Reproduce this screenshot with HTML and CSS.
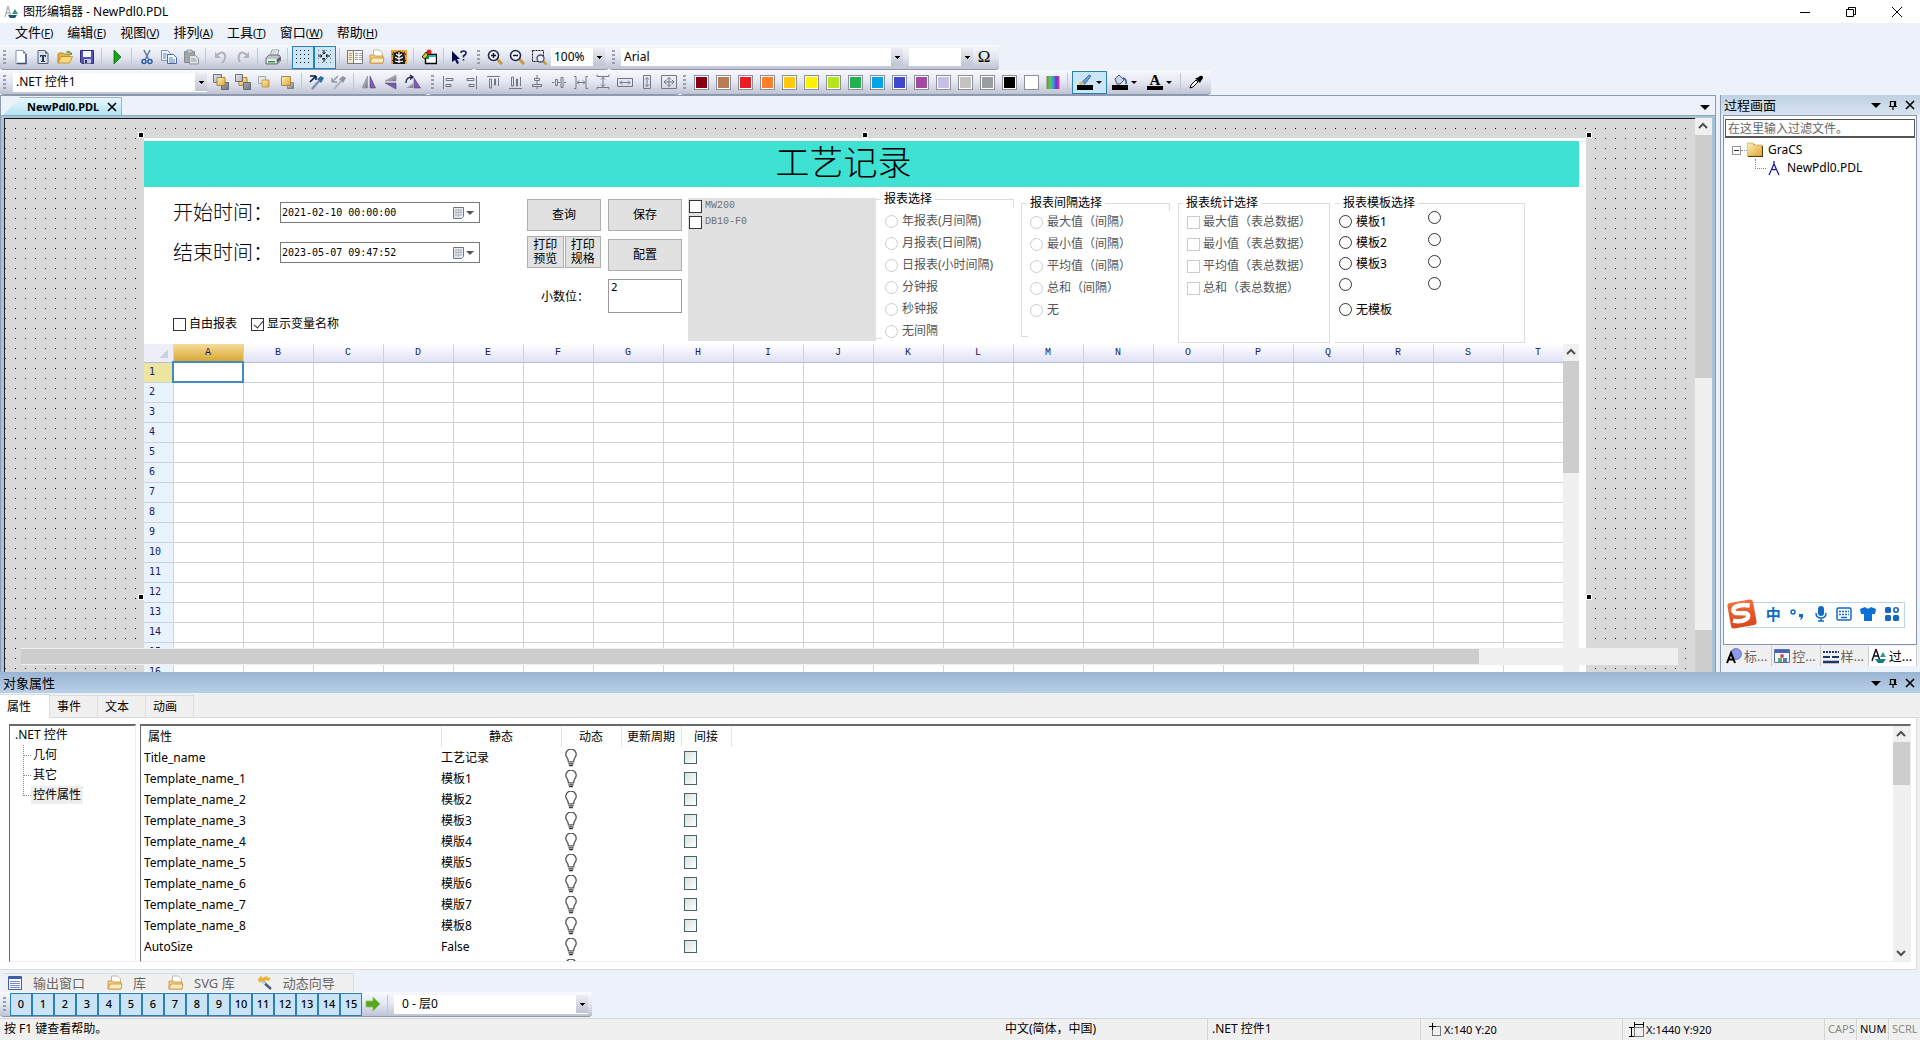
FILE: index.html
```html
<!DOCTYPE html>
<html lang="zh-CN">
<head>
    <meta charset="utf-8">
    <title>图形编辑器 - NewPdl0.PDL</title>
    <link rel="stylesheet" href="styles.css">
</head>
<body>
<!-- icon sprite -->
<svg class="sprite" aria-hidden="true">
    <defs>
        <linearGradient id="gold" x1="0" y1="0" x2="1" y2="1"><stop offset="0" stop-color="#fff0b8"/><stop offset="1" stop-color="#e2a83a"/></linearGradient>
        <linearGradient id="steel" x1="0" y1="0" x2="1" y2="1"><stop offset="0" stop-color="#e6e8ec"/><stop offset="1" stop-color="#6f747e"/></linearGradient>
        <linearGradient id="rainbow"><stop offset="0" stop-color="#8a7a50"/><stop offset=".25" stop-color="#4fd04a"/><stop offset=".5" stop-color="#3fa0d8"/><stop offset=".75" stop-color="#6a35d8"/><stop offset="1" stop-color="#e03a9a"/></linearGradient>
        <linearGradient id="sogou" x1="0" y1="0" x2="0" y2="1"><stop offset="0" stop-color="#f0703a"/><stop offset="1" stop-color="#d8481c"/></linearGradient>
    </defs>
    <symbol id="i-app" viewBox="0 0 16 16"><path d="M5 2 2 13M5 2l3 11M3 9h4" stroke="#a9b4bb" stroke-width="1.3" fill="none"/><path d="M12 5l3 5H9z" fill="#3d8f8c"/><path d="M5 11h9l-2 3H7z" fill="#1d5a72"/></symbol>
    <symbol id="i-new" viewBox="0 0 16 16"><path d="M3 1.500h7l3 3v10H3z" fill="#fbfdff" stroke="#8b96ab"/><path d="M13 5v9.500H4" fill="none" stroke="#35507e" stroke-width="1.300"/><path d="M10 1.500v3h3z" fill="#6b7f9f"/></symbol>
    <symbol id="i-newt" viewBox="0 0 16 16"><path d="M3 1.500h7l3 3v10H3z" fill="#dbe1ea" stroke="#56637c"/><path d="M10 1.500v3h3z" fill="#46587a"/><path d="M5 6h6v2h-1l-.5-1H9v5h1v1H6v-1h1V7h-.5L6 8H5z" fill="#2b3d5e"/></symbol>
    <symbol id="i-open" viewBox="0 0 16 16"><path d="M1 14V5l1-1h4l1 1h5v3H4z" fill="#e5b545" stroke="#a87a20" stroke-width=".8"/><path d="M1 14l3-6.500h11.500L12.500 14z" fill="#fbd97c" stroke="#b98824" stroke-width=".8"/><path d="M9 3q3-3 5 1l1-1v3h-3l1-1q-1.500-2-3-1z" fill="#6f9a55"/></symbol>
    <symbol id="i-save" viewBox="0 0 16 16"><path d="M1.500 1.500h13v13H3l-1.500-1.500z" fill="#5753b4" stroke="#2e2b78"/><path d="M4 2h8v6H4z" fill="#f5f6fc"/><path d="M5 10h7v4.500H5z" fill="#c5c8da"/><path d="M6 11h2v3H6z" fill="#2e2b78"/></symbol>
    <symbol id="i-play" viewBox="0 0 16 16"><path d="M5 1l7 7-7 7z" fill="#16a516" stroke="#0a6f0d" stroke-width=".8"/></symbol>
    <symbol id="i-cut" viewBox="0 0 16 16"><path d="M5 1l4.500 9M11 1L6.500 10" stroke="#64789f" stroke-width="1.600" fill="none"/><circle cx="5" cy="12.500" r="2" fill="none" stroke="#2c5da8" stroke-width="1.500"/><circle cx="11" cy="12.500" r="2" fill="none" stroke="#2c5da8" stroke-width="1.500"/></symbol>
    <symbol id="i-copy" viewBox="0 0 16 16"><path d="M.5 1.500h6l3 3v7h-9z" fill="#eef4fd" stroke="#7a93bf"/><path d="M6.500 5.500h6l3 3v6h-9z" fill="#f5f9ff" stroke="#4468a6"/><path d="M2 5h4M2 7h3M2 9h3M8 9h4M8 11h6M8 13h6" stroke="#5d86c8"/></symbol>
    <symbol id="i-paste" viewBox="0 0 16 16"><path d="M1.500 2.500h10v11h-10z" fill="#a3a6ad" stroke="#878b94"/><path d="M4 1h5v3H4z" fill="#cfd1d6" stroke="#878b94" stroke-width=".8"/><path d="M6.500 6.500h6l3 3v5.500h-9z" fill="#e0e2e8" stroke="#9296a0"/><path d="M8 10h5M8 12h6" stroke="#9ea2ac"/></symbol>
    <symbol id="i-undo" viewBox="0 0 16 16"><path d="M4 6q6-5 8 0 1 4-3 8" fill="none" stroke="#b0b3bd" stroke-width="2"/><path d="M2 3v6h6z" fill="#b0b3bd"/></symbol>
    <symbol id="i-redo" viewBox="0 0 16 16"><path d="M12 6q-6-5-8 0-1 4 1 7" fill="none" stroke="#b0b3bd" stroke-width="2"/><path d="M14 3v6H8z" fill="#b0b3bd"/></symbol>
    <symbol id="i-print" viewBox="0 0 16 16"><path d="M5 7l2-6h7l-2 6z" fill="#fff" stroke="#7d8898" stroke-width=".8"/><path d="M7 3h5M6.500 5h5" stroke="#92a2b5" stroke-width=".7"/><path d="M1 9l3-3h10l1.500 2v4L12 15H1z" fill="#bcc5ca" stroke="#4d5960" stroke-width=".8"/><path d="M2 10h9v4H2z" fill="#e8edf0"/><path d="M3 12h7v1.500H3z" fill="#2f9c3e"/><path d="M12 10l3-2v3l-3 3z" fill="#51645a"/></symbol>
    <symbol id="i-grid" viewBox="0 0 16 16"><path d="M1 1.500h15M1 5.500h15M1 9.500h15M1 13.500h15" stroke="#111" stroke-dasharray="1 3"/></symbol>
    <symbol id="i-snap" viewBox="0 0 16 16"><path d="M1 1.500h15M1 5.500h15M1 9.500h15M1 13.500h15" stroke="#777" stroke-dasharray="1 3"/><path d="M7 1v4M7 9v4M1 7h4M9 7h4M5.500 3.500L7 5l1.500-1.500M5.500 10.500L7 9l1.500 1.500M3.500 5.500L5 7 3.500 8.500M10.500 5.500L9 7l1.500 1.500" stroke="#000" fill="none"/></symbol>
    <symbol id="i-lib" viewBox="0 0 16 16"><path d="M.5 1.500h15v13H.5z" fill="#fff" stroke="#77797f"/><path d="M1 2h5v12H1z" fill="#f8ecca"/><path d="M6.500 2v12" stroke="#77797f"/><path d="M2 4.500h3M2 6.500h3M2 8.500h3M2 10.500h3M8 4.500h3M8 6.500h3M8 8.500h3M8 10.500h3M12 4.500h3M12 6.500h3M12 8.500h3M12 10.500h3" stroke="#a3a4a8"/></symbol>
    <symbol id="i-folder" viewBox="0 0 16 16"><path d="M4.500 1h6l3 3v7h-9z" fill="#fff" stroke="#b8a98d" stroke-width=".8"/><path d="M1 6h4l1 1h8v7H1z" fill="#f3cf85" stroke="#c48f38" stroke-width=".8"/><path d="M1 14l2-5h12l-1 5z" fill="#fdeabb" stroke="#c48f38" stroke-width=".8"/></symbol>
    <symbol id="i-dyn" viewBox="0 0 16 16"><path d="M0 1h16v14H0z" fill="#f0a030"/><path d="M2 15V8l1-4 5-2 5 2 1 4v7z" fill="#1c1c1c"/><path d="M8 3v11M5 5l3 2 3-2M4 8l4 2 4-2M4 12l4 1 4-1" stroke="#fff" stroke-width="1.200" fill="none"/><path d="M1 6l2-3M15 6l-2-3M1 12l2-2M15 12l-2-2" stroke="#222"/></symbol>
    <symbol id="i-ctl" viewBox="0 0 16 16"><path d="M4.500 5.500h11v9h-11z" fill="#fff" stroke="#000" stroke-width="1.400"/><path d="M5 6h10v2H5z" fill="#20b8cc"/><circle cx="8" cy="3" r="2.500" fill="#d81f1f"/><path d="M1 8l4-5 2 3-3 4z" fill="#e6c800" stroke="#000" stroke-width=".8"/><path d="M5 7h3v3H5z" fill="#1c8a3c"/></symbol>
    <symbol id="i-help" viewBox="0 0 16 16"><path d="M1 2v11l3-2 2 4 2-1-2-4h3z" fill="#0b0b4c"/><path d="M10 4q0-2 2.500-2T15 4q0 1.500-2.500 3v1.500M12.500 10v1.500" fill="none" stroke="#16166a" stroke-width="1.600"/></symbol>
    <symbol id="i-zin" viewBox="0 0 16 16"><path d="M10 10l5 5" stroke="#c79a3a" stroke-width="3"/><circle cx="6.500" cy="6.500" r="5" fill="#f2f5fd" stroke="#26264a" stroke-width="1.600"/><path d="M4 6.500h5M6.500 4v5" stroke="#10103c" stroke-width="1.500"/></symbol>
    <symbol id="i-zout" viewBox="0 0 16 16"><path d="M10 10l5 5" stroke="#c79a3a" stroke-width="3"/><circle cx="6.500" cy="6.500" r="5" fill="#f2f5fd" stroke="#26264a" stroke-width="1.600"/><path d="M4 6.500h5" stroke="#10103c" stroke-width="1.500"/></symbol>
    <symbol id="i-zarea" viewBox="0 0 16 16"><path d="M1.500 1.500h11v11h-11z" fill="none" stroke="#111" stroke-dasharray="2 1"/><path d="M12 12l3.500 3.500" stroke="#c79a3a" stroke-width="2.500"/><circle cx="9.500" cy="9.500" r="3.500" fill="#eceffa" stroke="#4a4c66" stroke-width="1.300"/></symbol>
    <symbol id="i-front" viewBox="0 0 16 16"><path d="M.5.500h8v8h-8zM8.500 8.500h7v7h-7z" fill="url(#steel)" stroke="#55585f" stroke-width=".8"/><path d="M4 3.500h8v8H4z" fill="url(#gold)" stroke="#9b7628" stroke-width=".8"/></symbol>
    <symbol id="i-back" viewBox="0 0 16 16"><path d="M4 3.500h8v8H4z" fill="url(#gold)" stroke="#9b7628" stroke-width=".8"/><path d="M.5.500h7v7h-7zM8.500 8.500h7v7h-7z" fill="url(#steel)" stroke="#55585f" stroke-width=".8"/></symbol>
    <symbol id="i-fwd" viewBox="0 0 16 16"><path d="M1.500 2.500h7v7h-7z" fill="#e6e7ec" stroke="#a6a8b0"/><path d="M5 6h7v7H5z" fill="url(#gold)" stroke="#b58f40" stroke-width=".8"/></symbol>
    <symbol id="i-bwd" viewBox="0 0 16 16"><path d="M8.500 8.500h6v6h-6z" fill="url(#steel)" stroke="#777" stroke-width=".8"/><path d="M2.500 2.500h9v9h-9z" fill="url(#gold)" stroke="#9b7628" stroke-width=".8"/></symbol>
    <symbol id="i-pick" viewBox="0 0 16 16"><path d="M3 15l7-8" stroke="#7895b5" stroke-width="2.500"/><path d="M8 5l4 4 3-5-3-2z" fill="#2c6f9e"/><path d="M1 2h6M7 2v4M7 2L1 8" stroke="#0d1f48" stroke-width="1.600" fill="none"/></symbol>
    <symbol id="i-pickoff" viewBox="0 0 16 16"><path d="M3 15l7-8" stroke="#b4b7c0" stroke-width="2.500"/><path d="M8 5l4 4 3-5-3-2z" fill="#8f939d"/><path d="M1 8h5M1 8V4M1 8l6-6" stroke="#9599a3" stroke-width="1.500" fill="none"/></symbol>
    <symbol id="i-fliph" viewBox="0 0 16 16"><path d="M6.500 2v12H1z" fill="url(#steel)" stroke="#8b8d96" stroke-width=".6"/><path d="M9 2v12h5.500z" fill="#7c5cab" stroke="#594084" stroke-width=".6"/></symbol>
    <symbol id="i-flipv" viewBox="0 0 16 16"><path d="M13 1v6H2z" fill="url(#steel)" stroke="#8b8d96" stroke-width=".6"/><path d="M13 15V9H2z" fill="#7c5cab" stroke="#594084" stroke-width=".6"/></symbol>
    <symbol id="i-rot" viewBox="0 0 16 16"><path d="M1 14h7V9z" fill="url(#steel)"/><path d="M9 4l6.500 10H9z" fill="#7c5cab" stroke="#594084" stroke-width=".6"/><path d="M1 9q0-6 6-6M5 1l3 2-3 2.500" stroke="#20204e" fill="none" stroke-width="1.300"/></symbol>
    <symbol id="i-al" viewBox="0 0 16 16"><path d="M2.500 2v13M5 4.500h7v2H5zM5 10.500h5v2H5z"/></symbol>
    <symbol id="i-ar" viewBox="0 0 16 16"><path d="M13.500 2v13M4 4.500h7v2H4zM6 10.500h5v2H6z"/></symbol>
    <symbol id="i-at" viewBox="0 0 16 16"><path d="M2 2.500h13M4.500 5h2v9h-2zM9.500 5h1v6h-1zM13.500 4v8"/></symbol>
    <symbol id="i-ab" viewBox="0 0 16 16"><path d="M2 14.500h13M4.500 3h2v9h-2zM9.500 5h1v7h-1zM13.500 3v9"/></symbol>
    <symbol id="i-ch" viewBox="0 0 16 16"><path d="M8 1v3M8 7v3M8 13v2M5.500 4.500h5v2h-5zM3.500 10.500h9v2h-9z"/></symbol>
    <symbol id="i-cv" viewBox="0 0 16 16"><path d="M1 8.500h2M7 8.500h2M13 8.500h2M4.500 5.500h2v6h-2zM10 3.500h2v10h-2z"/></symbol>
    <symbol id="i-dh" viewBox="0 0 16 16"><path d="M1 2.500h2v12H1M15 2.500h-2v12h2M4 8.500h8M6 6.500l-2 2 2 2M10 6.500l2 2-2 2"/></symbol>
    <symbol id="i-dv" viewBox="0 0 16 16"><path d="M2 .500V2.500h12V.500M2 15.500v-2h12v2M8 3.500v9M6 5.500l2-2 2 2M6 10.500l2 2 2-2"/></symbol>
    <symbol id="i-sw" viewBox="0 0 16 16"><path d="M.5 4.500h15v8H.5zM3 8.500h10M5 6.500l-2 2 2 2M11 6.500l2 2-2 2"/></symbol>
    <symbol id="i-sh" viewBox="0 0 16 16"><path d="M4.500 1.500h7v13h-7zM8 3.500v9M6 5.500l2-2 2 2M6 10.500l2 2 2-2"/></symbol>
    <symbol id="i-sb" viewBox="0 0 16 16"><path d="M.5 1.500h15v13H.5zM3 8h10M8 3.500v9M5 6L3 8l2 2M11 6l2 2-2 2M6 5.500l2-2 2 2M6 10.500l2 2 2-2"/></symbol>
    <symbol id="i-pen" viewBox="0 0 16 16"><path d="M4 9l8-8 2 1-6 8z" fill="#6d9bd6" stroke="#34537f" stroke-width=".7"/><path d="M2 9l3-2 2 3-4 1z" fill="#d8b56a"/><path d="M0 11h16v5H0z" fill="#000"/></symbol>
    <symbol id="i-fill" viewBox="0 0 16 16"><path d="M3 5l4-4 5 5-4 4H5z" fill="#cdd7ea" stroke="#44536f"/><path d="M11 4q4 1 3 6" stroke="#3b62a3" fill="none" stroke-width="1.500"/><path d="M0 11h16v5H0z" fill="#000"/></symbol>
    <symbol id="i-drop" viewBox="0 0 16 16"><path d="M2 14l1-3 5-5 2 2-5 5z" fill="#fff" stroke="#000"/><path d="M7 4l5 5 1-2 2-3q0-3-3-2L9 4z" fill="#000"/></symbol>
    <symbol id="i-cal" viewBox="0 0 16 16"><path d="M3.500 2.500h10v9l-2 2h-8z" fill="#e9edf1" stroke="#6d7680"/><path d="M5 5h7M5 7.500h7M5 10h6M6 4v8M8.500 4v8M11 4v7" stroke="#a4adb6" stroke-width=".8"/></symbol>
    <symbol id="i-bulb" viewBox="1 1 14 14"><path d="M6 11q0-2-1.500-4a4 4 0 1 1 7 0Q10 9 10 11z" fill="#fff" stroke="#555"/><path d="M6 12.500h4M6.500 14h3" stroke="#333"/></symbol>
    <symbol id="i-pin" viewBox="0 0 16 16"><path d="M5.500 4v5M5.500 4.500h5M9.500 4v5M10.500 4v5M4 9.500h8M8 10v3" stroke="#000" stroke-width="1.200" fill="none"/></symbol>
    <symbol id="i-x" viewBox="0 0 16 16"><path d="M4 4l8 8M12 4l-8 8" stroke="#000" stroke-width="1.600"/></symbol>
    <symbol id="i-down" viewBox="0 0 16 16"><path d="M3 6h10l-5 5z" fill="#000"/></symbol>
    <symbol id="i-yfold" viewBox="0 0 16 16"><path d="M1 2h6l1 2h8v11H1z" fill="#1f1a08"/><path d="M0 1h6l1 2h8v11H0z" fill="url(#gold)" stroke="#c6982e" stroke-width=".6"/></symbol>
    <symbol id="i-pdl" viewBox="0 0 16 16"><path d="M8 1v3M8 4L3 15M8 4l5 11M6 9q2 1.500 4 0" stroke="#1f1f9c" stroke-width="1.300" fill="none"/></symbol>
    <symbol id="i-chev" viewBox="0 0 16 16"><path d="M4 10l4-4 4 4" stroke="#505050" stroke-width="2" fill="none"/></symbol>
    <symbol id="i-chevd" viewBox="0 0 16 16"><path d="M4 6l4 4 4-4" stroke="#505050" stroke-width="2" fill="none"/></symbol>
    <symbol id="i-std" viewBox="0 0 16 16"><circle cx="10" cy="6" r="5.500" fill="#8c98ea" stroke="#3b479c" stroke-width=".6"/><path d="M1 15L5 5l4 10M2.500 11.500h5" stroke="#000" stroke-width="2" fill="none"/></symbol>
    <symbol id="i-cont" viewBox="0 0 16 16"><path d="M.5 1.500h15v13H.5z" fill="#f1f4fc" stroke="#5c6f9e"/><path d="M1 2h14v3H1z" fill="#4365b4"/><circle cx="8" cy="8" r="2" fill="#d05050"/><path d="M4 10h4v4H4z" fill="#5ab06c"/><path d="M9 10h4v4H9z" fill="#5a7ad0"/></symbol>
    <symbol id="i-style" viewBox="0 0 16 16"><path d="M0 4h16" stroke="#20346e" stroke-width="2" stroke-dasharray="2 1"/><path d="M0 9h7M9 9h7" stroke="#20346e" stroke-width="2"/><path d="M0 14h16" stroke="#20346e" stroke-width="2.500"/></symbol>
    <symbol id="i-proc" viewBox="0 0 16 16"><path d="M5 1L1 13M5 1l4 12M3 8h4" stroke="#111" stroke-width="1.400" fill="none"/><path d="M12 4l3 5H9z" fill="#2d9c88"/><path d="M4 11h11l-3 4H7z" fill="#1c7a80"/></symbol>
    <symbol id="i-out" viewBox="0 0 16 16"><path d="M1.500 1.500h13v13h-13z" fill="#fff" stroke="#3b5fae"/><path d="M2 2h12v2H2z" fill="#3b5fae"/><path d="M3 6.500h10M3 8.500h10M3 10.500h10M3 12.500h10" stroke="#6f8cc8"/></symbol>
    <symbol id="i-wand" viewBox="0 0 16 16"><path d="M4 5l10 9" stroke="#4d5c78" stroke-width="2.500"/><path d="M4 5l4 4" stroke="#d8dce6" stroke-width="2"/><path d="M1 4l3-3 2 2 3-2 3 2 2-1-2 4-3-1-2 2-3-1-2 2z" fill="#ecb23c"/></symbol>
    <symbol id="i-go" viewBox="0 0 16 16"><path d="M1 5h7V1l7 7-7 7v-4H1z" fill="#57a81e" stroke="#8cc35c" stroke-width=".8"/></symbol>
    <symbol id="i-pos" viewBox="0 0 16 16"><path d="M5.500 1v7M2 4.500h7" stroke="#000"/><path d="M5.500 4.500h8v9h-8z" stroke="#000" fill="none" stroke-dasharray="1 1"/></symbol>
    <symbol id="i-size" viewBox="0 0 16 16"><path d="M6 2.500h8M5.500 0v5M14.500 0v5M2.500 6v8M0 5.500h5M0 14.500h5" stroke="#000"/><path d="M5.500 5.500h9v9h-9z" stroke="#000" fill="none" stroke-dasharray="1 1"/></symbol>
</svg>

<header class="titlebar">
    <svg class="icon"><use href="#i-app"/></svg>
    <h1>图形编辑器 - NewPdl0.PDL</h1>
    <div class="window-buttons">
        <button aria-label="最小化"><svg viewBox="0 0 12 12"><path d="M1 6.500h10"/></svg></button>
        <button aria-label="还原"><svg viewBox="0 0 12 12"><path d="M1.500 3.500h7v7h-7zM3.500 3V1.500h7v7H9"/></svg></button>
        <button aria-label="关闭"><svg viewBox="0 0 12 12"><path d="M1 1l10 10M11 1L1 11"/></svg></button>
    </div>
</header>

<nav class="menubar">
    <a href="#">文件<small>(<u>F</u>)</small></a>
    <a href="#">编辑<small>(<u>E</u>)</small></a>
    <a href="#">视图<small>(<u>V</u>)</small></a>
    <a href="#">排列<small>(<u>A</u>)</small></a>
    <a href="#">工具<small>(<u>T</u>)</small></a>
    <a href="#">窗口<small>(<u>W</u>)</small></a>
    <a href="#">帮助<small>(<u>H</u>)</small></a>
</nav>

<div class="toolbars">
    <div class="toolbar">
        <i class="grip"></i>
        <button aria-label="新建"><svg class="icon"><use href="#i-new"/></svg></button>
        <button aria-label="新建模板"><svg class="icon"><use href="#i-newt"/></svg></button>
        <button aria-label="打开"><svg class="icon"><use href="#i-open"/></svg></button>
        <button aria-label="保存"><svg class="icon"><use href="#i-save"/></svg></button>
        <i class="sep"></i>
        <button aria-label="运行"><svg class="icon"><use href="#i-play"/></svg></button>
        <i class="sep"></i>
        <button aria-label="剪切"><svg class="icon"><use href="#i-cut"/></svg></button>
        <button aria-label="复制"><svg class="icon"><use href="#i-copy"/></svg></button>
        <button aria-label="粘贴"><svg class="icon"><use href="#i-paste"/></svg></button>
        <i class="sep"></i>
        <button aria-label="撤消"><svg class="icon"><use href="#i-undo"/></svg></button>
        <button aria-label="重做"><svg class="icon"><use href="#i-redo"/></svg></button>
        <i class="sep"></i>
        <button aria-label="打印"><svg class="icon"><use href="#i-print"/></svg></button>
        <i class="sep"></i>
        <button class="pressed" aria-label="网格"><svg class="icon"><use href="#i-grid"/></svg></button>
        <button class="pressed" aria-label="对齐网格"><svg class="icon"><use href="#i-snap"/></svg></button>
        <i class="sep"></i>
        <button aria-label="属性"><svg class="icon"><use href="#i-lib"/></svg></button>
        <button aria-label="库"><svg class="icon"><use href="#i-folder"/></svg></button>
        <button aria-label="动态向导"><svg class="icon"><use href="#i-dyn"/></svg></button>
        <i class="sep"></i>
        <button aria-label="控件"><svg class="icon"><use href="#i-ctl"/></svg></button>
        <i class="sep"></i>
        <button aria-label="这是什么"><svg class="icon"><use href="#i-help"/></svg></button>
    </div>
    <div class="toolbar">
        <i class="grip"></i>
        <button aria-label="放大"><svg class="icon"><use href="#i-zin"/></svg></button>
        <button aria-label="缩小"><svg class="icon"><use href="#i-zout"/></svg></button>
        <button aria-label="缩放区域"><svg class="icon"><use href="#i-zarea"/></svg></button>
        <span class="combo combo-zoom"><select aria-label="缩放"><option>100%</option></select></span>
    </div>
    <div class="toolbar">
        <i class="grip"></i>
        <span class="combo combo-font"><select aria-label="字体"><option>Arial</option></select></span>
        <span class="combo combo-size"><select aria-label="字号"><option></option></select></span>
        <button class="omega" aria-label="符号">Ω</button>
    </div>
</div>

<div class="toolbars">
    <div class="toolbar">
        <i class="grip"></i>
        <span class="combo combo-object"><select aria-label="对象"><option>.NET 控件1</option></select></span>
        <button aria-label="置于顶层"><svg class="icon"><use href="#i-front"/></svg></button>
        <button aria-label="置于底层"><svg class="icon"><use href="#i-back"/></svg></button>
        <button aria-label="上移一层"><svg class="icon"><use href="#i-fwd"/></svg></button>
        <button aria-label="下移一层"><svg class="icon"><use href="#i-bwd"/></svg></button>
        <i class="sep"></i>
        <button aria-label="拾取属性"><svg class="icon"><use href="#i-pick"/></svg></button>
        <button aria-label="应用属性"><svg class="icon"><use href="#i-pickoff"/></svg></button>
        <i class="sep"></i>
        <button aria-label="水平翻转"><svg class="icon"><use href="#i-fliph"/></svg></button>
        <button aria-label="垂直翻转"><svg class="icon"><use href="#i-flipv"/></svg></button>
        <button aria-label="旋转"><svg class="icon"><use href="#i-rot"/></svg></button>
    </div>
    <div class="toolbar align-bar">
        <i class="grip"></i>
        <button aria-label="左对齐"><svg class="icon"><use href="#i-al"/></svg></button>
        <button aria-label="右对齐"><svg class="icon"><use href="#i-ar"/></svg></button>
        <button aria-label="顶对齐"><svg class="icon"><use href="#i-at"/></svg></button>
        <button aria-label="底对齐"><svg class="icon"><use href="#i-ab"/></svg></button>
        <button aria-label="水平居中"><svg class="icon"><use href="#i-ch"/></svg></button>
        <button aria-label="垂直居中"><svg class="icon"><use href="#i-cv"/></svg></button>
        <button aria-label="水平间距"><svg class="icon"><use href="#i-dh"/></svg></button>
        <button aria-label="垂直间距"><svg class="icon"><use href="#i-dv"/></svg></button>
        <button aria-label="同宽"><svg class="icon"><use href="#i-sw"/></svg></button>
        <button aria-label="同高"><svg class="icon"><use href="#i-sh"/></svg></button>
        <button aria-label="同大小"><svg class="icon"><use href="#i-sb"/></svg></button>
    </div>
    <div class="toolbar">
        <i class="grip"></i>
        <div class="swatches" id="swatches"></div>
        <button aria-label="更多颜色"><svg class="more-colors" viewBox="0 0 14 14"><path d="M0 0h14v14H0z" fill="url(#rainbow)"/></svg></button>
        <i class="sep"></i>
        <button class="split pressed" aria-label="线条颜色"><svg class="icon"><use href="#i-pen"/></svg><i class="arrow"></i></button>
        <button class="split" aria-label="填充颜色"><svg class="icon"><use href="#i-fill"/></svg><i class="arrow"></i></button>
        <button class="split" aria-label="字体颜色"><span class="font-color">A</span><i class="arrow"></i></button>
        <i class="sep"></i>
        <button aria-label="取色"><svg class="icon"><use href="#i-drop"/></svg></button>
    </div>
</div>

<main class="workspace">
    <section class="editor">
        <div class="doc-tabs">
            <div class="doc-tab"><span>NewPdl0.PDL</span><button aria-label="关闭"><svg class="icon"><use href="#i-x"/></svg></button></div>
            <button class="doc-list" aria-label="文档列表"><svg class="icon"><use href="#i-down"/></svg></button>
        </div>
        <div class="editor-body">
            <div class="canvas">
                <div class="selection">
                    <form class="report">
                        <h2>工艺记录</h2>
                        <div class="report-controls">
                            <div class="period">
                                <div class="field">
                                    <label for="start">开始时间：</label>
                                    <span class="date"><input id="start" type="text" value="2021-02-10 00:00:00"><svg class="icon"><use href="#i-cal"/></svg><i class="arrow"></i></span>
                                </div>
                                <div class="field">
                                    <label for="end">结束时间：</label>
                                    <span class="date"><input id="end" type="text" value="2023-05-07 09:47:52"><svg class="icon"><use href="#i-cal"/></svg><i class="arrow"></i></span>
                                </div>
                                <div class="flags">
                                    <label><input type="checkbox">自由报表</label>
                                    <label><input type="checkbox" checked>显示变量名称</label>
                                </div>
                            </div>
                            <div class="actions">
                                <button type="button">查询</button>
                                <div class="pair"><button type="button">打印<br>预览</button><button type="button">打印<br>规格</button></div>
                                <label for="digits">小数位：</label>
                            </div>
                            <div class="actions actions-right">
                                <button type="button">保存</button>
                                <button type="button">配置</button>
                                <textarea id="digits">2</textarea>
                            </div>
                            <div class="variables">
                                <label><input type="checkbox">MW200</label>
                                <label><input type="checkbox">DB10-F0</label>
                            </div>
                            <fieldset class="group group-report">
                                <legend>报表选择</legend>
                                <label><input type="radio" name="report" disabled>年报表(月间隔)</label>
                                <label><input type="radio" name="report" disabled>月报表(日间隔)</label>
                                <label><input type="radio" name="report" disabled>日报表(小时间隔)</label>
                                <label><input type="radio" name="report" disabled>分钟报</label>
                                <label><input type="radio" name="report" disabled>秒钟报</label>
                                <label><input type="radio" name="report" disabled>无间隔</label>
                            </fieldset>
                            <fieldset class="group group-interval">
                                <legend>报表间隔选择</legend>
                                <label><input type="radio" name="interval" disabled>最大值（间隔）</label>
                                <label><input type="radio" name="interval" disabled>最小值（间隔）</label>
                                <label><input type="radio" name="interval" disabled>平均值（间隔）</label>
                                <label><input type="radio" name="interval" disabled>总和（间隔）</label>
                                <label><input type="radio" name="interval" disabled>无</label>
                            </fieldset>
                            <fieldset class="group group-stats">
                                <legend>报表统计选择</legend>
                                <label><input type="checkbox" disabled>最大值（表总数据）</label>
                                <label><input type="checkbox" disabled>最小值（表总数据）</label>
                                <label><input type="checkbox" disabled>平均值（表总数据）</label>
                                <label><input type="checkbox" disabled>总和（表总数据）</label>
                            </fieldset>
                            <fieldset class="group group-template">
                                <legend>报表模板选择</legend>
                                <div class="template-columns">
                                    <div>
                                        <label><input type="radio" name="tpl">模板1</label>
                                        <label><input type="radio" name="tpl">模板2</label>
                                        <label><input type="radio" name="tpl">模板3</label>
                                        <label><input type="radio" name="tpl" aria-label="模板4"></label>
                                        <label class="no-template"><input type="radio" name="tpl">无模板</label>
                                    </div>
                                    <div class="template-more">
                                        <input type="radio" name="tpl" aria-label="模板5">
                                        <input type="radio" name="tpl" aria-label="模板6">
                                        <input type="radio" name="tpl" aria-label="模板7">
                                        <input type="radio" name="tpl" aria-label="模板8">
                                    </div>
                                </div>
                            </fieldset>
                        </div>
                        <div class="sheet-area">
                            <div class="sheet-clip"><table class="sheet" id="sheet"></table></div>
                            <div class="vscroll sheet-scroll"><svg class="icon"><use href="#i-chev"/></svg><i class="thumb"></i></div>
                        </div>
                    </form>
                    <i class="handle handle-tl"></i><i class="handle handle-t"></i><i class="handle handle-tr"></i>
                    <i class="handle handle-l"></i><i class="handle handle-r"></i>
                </div>
                <div class="hscroll"><i class="thumb"></i></div>
            </div>
            <div class="vscroll editor-scroll"><svg class="icon"><use href="#i-chev"/></svg><i class="thumb"></i><i class="thumb thumb-end"></i></div>
        </div>
    </section>

    <aside class="side">
        <div class="side-caption"><h2>过程画面</h2>
            <button aria-label="菜单"><svg class="icon"><use href="#i-down"/></svg></button>
            <button aria-label="固定"><svg class="icon"><use href="#i-pin"/></svg></button>
            <button aria-label="关闭"><svg class="icon"><use href="#i-x"/></svg></button>
        </div>
        <div class="side-body">
            <input class="filter" type="text" aria-label="过滤文件" placeholder="在这里输入过滤文件。">
            <ul class="files">
                <li><i class="toggle"></i><i class="dots"></i><svg class="icon"><use href="#i-yfold"/></svg><span>GraCS</span></li>
                <li class="file"><i class="elbow"></i><svg class="icon"><use href="#i-pdl"/></svg><span>NewPdl0.PDL</span></li>
            </ul>
        </div>
        <div class="side-tabs">
            <button><svg class="icon"><use href="#i-std"/></svg>标...</button>
            <button><svg class="icon"><use href="#i-cont"/></svg>控...</button>
            <button><svg class="icon"><use href="#i-style"/></svg>样...</button>
            <button class="active"><svg class="icon"><use href="#i-proc"/></svg>过...</button>
        </div>
        <!-- input method bar floats over the panel -->
        <div class="ime">
            <svg class="ime-logo" viewBox="0 0 32 32"><g transform="rotate(-10 16 16)"><rect x="3" y="3" width="26" height="26" rx="3" fill="url(#sogou)"/><path d="M25 9q-9-3-15-1-4 3 0 6l10 2q4 3-1 6-6 2-13-1" fill="none" stroke="#fff" stroke-width="4.500"/></g></svg>
            <b>中</b>
            <svg viewBox="0 0 16 16"><circle cx="4" cy="6" r="2" fill="none" stroke="#1169c4" stroke-width="1.500"/><path d="M10 8h4v3q-1 3-3 3l1-3h-2z" fill="#1169c4"/></svg>
            <svg viewBox="0 0 16 16"><rect x="5" y="0" width="6" height="10" rx="3" fill="#1169c4"/><path d="M3 7q0 5 5 5t5-5M8 12v3M5 15h6" stroke="#1169c4" stroke-width="1.500" fill="none"/></svg>
            <svg viewBox="0 0 16 16"><rect x="1" y="2" width="14" height="12" rx="1.500" fill="none" stroke="#1169c4" stroke-width="1.500"/><path d="M3 5.500h10M3 8.500h10" stroke="#1169c4" stroke-width="1.500" stroke-dasharray="2 1"/><path d="M5 11.500h6" stroke="#1169c4" stroke-width="1.500"/></svg>
            <svg viewBox="0 0 16 16"><path d="M0 3l5-2q3 3 6 0l5 2-1 5h-3v7H4V8H1z" fill="#0c6fd6"/></svg>
            <svg viewBox="0 0 16 16"><g fill="#1169c4"><rect x="1" y="1" width="6" height="6" rx="1.500"/><rect x="1" y="9" width="6" height="6" rx="1.500"/><rect x="9" y="9" width="6" height="6" rx="1.500"/></g><circle cx="12" cy="4" r="2.200" fill="none" stroke="#1169c4" stroke-width="1.600"/></svg>
        </div>
    </aside>
</main>

<section class="properties">
    <div class="prop-caption"><h2>对象属性</h2>
        <button aria-label="菜单"><svg class="icon"><use href="#i-down"/></svg></button>
        <button aria-label="固定"><svg class="icon"><use href="#i-pin"/></svg></button>
        <button aria-label="关闭"><svg class="icon"><use href="#i-x"/></svg></button>
    </div>
    <div class="prop-tabs">
        <button class="active">属性</button><button>事件</button><button>文本</button><button>动画</button>
    </div>
    <div class="prop-body">
        <div class="prop-tree">
            <span>.NET 控件</span>
            <ul>
                <li>几何</li>
                <li>其它</li>
                <li><b>控件属性</b></li>
            </ul>
        </div>
        <div class="prop-list">
            <table>
                <thead>
                    <tr><th class="col-name">属性</th><th class="col-static">静态</th><th class="col-dynamic">动态</th><th class="col-cycle">更新周期</th><th class="col-indirect">间接</th><th></th></tr>
                </thead>
                <tbody id="props"></tbody>
            </table>
            <div class="vscroll prop-scroll"><svg class="icon"><use href="#i-chev"/></svg><i class="thumb"></i><svg class="icon scroll-end"><use href="#i-chevd"/></svg></div>
        </div>
    </div>
</section>

<footer>
    <div class="output-tabs">
        <button><svg class="icon"><use href="#i-out"/></svg>输出窗口</button>
        <button><svg class="icon"><use href="#i-folder"/></svg>库</button>
        <button><svg class="icon"><use href="#i-folder"/></svg>SVG 库</button>
        <button><svg class="icon"><use href="#i-wand"/></svg>动态向导</button>
    </div>
    <div class="toolbars">
        <div class="toolbar">
            <i class="grip"></i>
            <div class="layers" id="layers"></div>
            <button aria-label="转到"><svg class="icon"><use href="#i-go"/></svg></button>
            <i class="sep"></i>
            <span class="combo combo-layer"><select aria-label="图层"><option>0 - 层0</option></select></span>
        </div>
    </div>
    <div class="statusbar">
        <span class="status-help">按 F1 键查看帮助。</span>
        <span class="status-lang">中文(简体，中国)</span>
        <span class="status-object">.NET 控件1</span>
        <span class="status-pos"><svg class="icon"><use href="#i-pos"/></svg>X:140 Y:20</span>
        <span class="status-pos"><svg class="icon"><use href="#i-size"/></svg>X:1440 Y:920</span>
        <span class="status-key off">CAPS</span>
        <span class="status-key">NUM</span>
        <span class="status-key off">SCRL</span>
    </div>
</footer>
<script src="script.js"></script>
</body>
</html>
```

FILE: styles.css
```css
* {
    box-sizing: border-box;
}

body {
    margin: 0;
    height: 100vh;
    display: flex;
    flex-direction: column;
    overflow: hidden;
    background: #edf1fa;
    color: #000;
    font-family: "Noto Sans", "Noto Sans CJK SC", sans-serif;
    font-size: 12px;
    line-height: 16px;
}

h1, h2, ul, fieldset {
    margin: 0;
    padding: 0;
    font-size: 12px;
    font-weight: normal;
}

ul {
    list-style: none;
}

button, input, select, textarea {
    margin: 0;
    padding: 0;
    border: 0;
    border-radius: 0;
    background: none;
    color: inherit;
    font: inherit;
}

i, b {
    font-style: normal;
    font-weight: normal;
}

.sprite {
    position: absolute;
    width: 0;
    height: 0;
}

.icon {
    width: 16px;
    height: 16px;
    flex: none;
    display: block;
}

/* title and menu */
.titlebar {
    display: flex;
    align-items: center;
    height: 23px;
    padding-left: 3px;
    gap: 4px;
    background: #fff;
}

.window-buttons {
    margin-left: auto;
    display: flex;
}

.window-buttons button {
    width: 46px;
    height: 20px;
    display: flex;
    align-items: center;
    justify-content: center;
}

.window-buttons svg {
    width: 12px;
    height: 12px;
    fill: none;
    stroke: #000;
}

.menubar {
    display: flex;
    height: 22px;
    align-items: flex-start;
    padding-left: 15px;
    gap: 14px;
    font-size: 13px;
    line-height: 19px;
}

.menubar a {
    color: #000;
    text-decoration: none;
    white-space: nowrap;
}

.menubar small {
    font-size: 11px;
}

/* toolbars */
.toolbars {
    display: flex;
    height: 25px;
}

.toolbar {
    display: flex;
    align-items: center;
    padding-right: 4px;
    background: linear-gradient(#f7f9fe, #e4e7f1 50%, #bfc3d4);
    border-bottom: 1px solid #9297a8;
    border-radius: 0 0 4px 4px;
}

.toolbar button {
    width: 22px;
    height: 23px;
    display: flex;
    align-items: center;
    justify-content: center;
}

.grip {
    width: 3px;
    height: 14px;
    margin: 0 4px 0 3px;
    background: repeating-linear-gradient(#9a9fae 0 2px, transparent 2px 4px);
}

.sep {
    width: 1px;
    height: 18px;
    margin: 0 4px 0 3px;
    background: #c3c7d3;
}

.toolbar .pressed {
    background: #cbe6f6;
    border: 1px solid #2a7fb5;
}

.arrow {
    border: 4px solid transparent;
    border-top-color: #000;
    border-bottom: 0;
}

.combo {
    position: relative;
    display: flex;
    height: 18px;
    background: #fff;
}

.combo::after {
    content: "";
    position: absolute;
    right: 0;
    top: 0;
    width: 12px;
    height: 18px;
    background: linear-gradient(#000, #000) center 8px / 5px 1px no-repeat, linear-gradient(#000, #000) center 9px / 3px 1px no-repeat, linear-gradient(#000, #000) center 10px / 1px 1px no-repeat, linear-gradient(#eceef5, #bfc3d2);
    pointer-events: none;
}

.combo select {
    flex: 1;
    appearance: none;
    padding-left: 3px;
}

.combo-zoom {
    width: 54px;
    margin-left: 1px;
}

.combo-font {
    width: 282px;
    margin-left: 2px;
}

.combo-size {
    width: 64px;
    margin-left: 6px;
}

.combo-object {
    width: 194px;
    height: 19px;
    margin: 0 3px;
}

.toolbar .omega {
    font-family: "Liberation Serif", serif;
    font-size: 17px;
}

.align-bar svg {
    fill: none;
    stroke: #747884;
}

.swatches {
    display: flex;
}

.swatches i {
    display: block;
    width: 15px;
    height: 15px;
    border: 1px solid #8b8f9a;
    box-shadow: inset 0 0 0 1px #fff;
}

.toolbar .align-bar, .align-bar + .toolbar {
    padding-right: 4px;
}

.align-bar {
    padding-right: 0;
}

.more-colors {
    width: 14px;
    height: 13px;
}

.toolbar .split {
    width: 35px;
    gap: 3px;
}

.split .arrow {
    border-width: 3px;
    border-bottom: 0;
}

.font-color {
    width: 16px;
    height: 16px;
    border-bottom: 4px solid #000;
    font: bold 15px/12px "Liberation Serif", serif;
}

/* workspace */
.workspace {
    flex: 1;
    min-height: 0;
    display: flex;
    gap: 4px;
}

.editor {
    flex: 1;
    min-width: 0;
    display: flex;
    flex-direction: column;
    border: 1px solid #8a9cb4;
    border-bottom: 0;
}

.doc-tabs {
    display: flex;
    align-items: flex-end;
    justify-content: space-between;
    height: 20px;
    padding-left: 2px;
    border-bottom: 1px solid #8fa7ba;
}

.doc-tab {
    display: flex;
    align-items: center;
    height: 18px;
    padding: 0 1px 0 24px;
    gap: 5px;
    background: linear-gradient(#e8f8fd, #b4e4f2);
    border-top: 1px solid #9db3c3;
    border-right: 1px solid #9db3c3;
    clip-path: polygon(17px 0, 100% 0, 100% 100%, 0 100%);
    font-size: 11px;
    font-weight: bold;
}

.doc-list {
    padding-right: 2px;
}

.editor-body {
    flex: 1;
    min-height: 0;
    display: flex;
    padding: 2px 3px 0 3px;
    background: #a7c4d8;
}

.canvas {
    flex: 1;
    position: relative;
    overflow: hidden;
    border-left: 1px solid #222;
    border-top: 1px solid #111;
    background: #d9d9d9 url("data:image/svg+xml,%3Csvg xmlns='http://www.w3.org/2000/svg' width='10' height='10'%3E%3Crect y='9' width='1' height='1'/%3E%3C/svg%3E");
}

.selection {
    position: relative;
    margin: 19px 109px 0 139px;
}

.report {
    height: 560px;
    padding: 3px 7px 0 0;
    background: #fff;
    display: flex;
    flex-direction: column;
}

.report h2 {
    height: 46px;
    padding-right: 36px;
    background: #3fe2d2;
    text-align: center;
    font-size: 34px;
    font-weight: 300;
    line-height: 42px;
}

.report-controls {
    display: flex;
    align-items: flex-start;
    height: 157px;
    padding-left: 29px;
}

.period {
    width: 307px;
    padding-top: 15px;
    display: flex;
    flex-direction: column;
}

.field {
    display: flex;
    align-items: center;
    justify-content: space-between;
    height: 21px;
    margin-bottom: 19px;
}

.field label {
    font-size: 20px;
    font-weight: 300;
}

.date {
    display: flex;
    align-items: center;
    width: 200px;
    height: 21px;
    padding-right: 5px;
    border: 1px solid #7a7a7a;
}

.date input {
    flex: 1;
    min-width: 0;
    padding-left: 1px;
    font-family: "DejaVu Sans Mono", monospace;
    font-size: 10px;
}

.date .arrow {
    border-top-color: #555;
}

.flags {
    display: flex;
    gap: 14px;
    padding-top: 34px;
}

.flags label, .variables label, .group label {
    display: flex;
    align-items: center;
    gap: 3px;
    white-space: nowrap;
}

input[type=checkbox], input[type=radio] {
    appearance: none;
    flex: none;
    width: 13px;
    height: 13px;
    border: 1px solid #333;
    background: #fff;
}

input[type=radio] {
    border-radius: 50%;
}

input[type]:disabled {
    border-color: #ccc;
}

input[type=checkbox]:checked::after {
    content: "";
    display: block;
    width: 4px;
    height: 8px;
    margin: 0 0 0 4px;
    border: solid #333;
    border-width: 0 1px 1px 0;
    rotate: 40deg;
}

.actions {
    width: 74px;
    margin-left: 47px;
    padding-top: 12px;
    display: flex;
    flex-direction: column;
    gap: 5px;
}

.actions-right {
    margin-left: 7px;
    gap: 8px;
}

.actions button {
    flex: 1;
    min-height: 32px;
    background: #e1e1e1;
    border: 1px solid #adadad;
    line-height: 14px;
}

.pair {
    display: flex;
    gap: 1px;
}

.actions label {
    padding: 16px 0 0 14px;
}

.actions textarea {
    height: 34px;
    padding: 0 2px;
    border: 1px solid #999;
    background: #fff;
    font-family: "DejaVu Sans Mono", monospace;
    font-size: 11px;
    resize: none;
}

.variables {
    width: 188px;
    height: 143px;
    margin: 11px 0 0 6px;
    padding-left: 1px;
    background: #e1e1e1;
    color: #707070;
    font-family: "Liberation Mono", monospace;
    font-size: 10px;
}

.group {
    height: 148px;
    margin-top: 8px;
    border: 1px solid #dcdcdc;
}

.group legend {
    margin-left: 5px;
    padding: 0 3px;
}

.group label {
    height: 22px;
    padding-left: 8px;
    gap: 4px;
    color: #555;
}

.group-report {
    width: 138px;
    margin-top: 4px;
    padding-top: 3px;
    border-width: 1px 0 0;
    background: linear-gradient(#dcdcdc, #dcdcdc) right top / 1px 8px no-repeat, linear-gradient(#dcdcdc, #dcdcdc) left bottom / 6px 1px no-repeat;
}

.group-report label {
    padding-left: 9px;
}

.group-interval {
    width: 149px;
    height: 142px;
    margin-left: 7px;
    border-width: 1px 0 0 1px;
    background: linear-gradient(#dcdcdc, #dcdcdc) right top / 1px 7px no-repeat, linear-gradient(#dcdcdc, #dcdcdc) left bottom / 6px 1px no-repeat;
}

.group-stats {
    width: 152px;
    margin-left: 8px;
}

.group-stats legend {
    margin-left: 4px;
}

.group-stats label {
    gap: 3px;
}

.group-template {
    width: 190px;
    margin-left: 5px;
    border-left: 0;
}

.template-columns {
    display: flex;
    gap: 36px;
}

.template-columns > div:first-child {
    width: 57px;
}

.group-template label {
    height: 21px;
    padding-left: 4px;
    gap: 4px;
    color: #000;
}

.group-template .no-template {
    margin-top: 4px;
}

.template-more {
    display: flex;
    flex-direction: column;
    gap: 9px;
}

/* spreadsheet */
.sheet-area {
    flex: 1;
    min-height: 0;
    display: flex;
}

.sheet-clip {
    flex: 1;
    min-width: 0;
    overflow: hidden;
}

.sheet {
    width: 1429px;
    table-layout: fixed;
    border-collapse: collapse;
    font-family: "Liberation Mono", monospace;
    font-size: 10px;
    color: #1b1b66;
}

.sheet td, .sheet th {
    height: 20px;
    padding: 0;
    border-right: 1px solid #cfd3dd;
    border-bottom: 1px solid #cfd3dd;
}

.sheet tr:first-child th {
    height: 18px;
    line-height: 16px;
    width: 70px;
    background: linear-gradient(#fff, #dfe1f5);
    border-bottom-color: #b8bed2;
    font-weight: normal;
}

.sheet tr:first-child .corner {
    width: 29px;
    background: linear-gradient(135deg, transparent 50%, #cdd1dc 50%) 15px 5px / 9px 9px no-repeat, #eceef9;
}

.sheet tr:first-child .current {
    background: linear-gradient(#f4dd9c, #d8a42c);
}

.sheet .row-head {
    padding-left: 5px;
    text-align: left;
    background: #e9f3fd;
    font-family: "DejaVu Sans Mono", monospace;
    font-weight: normal;
}

.sheet .row-head.current {
    background: #ebe5a0;
}

.sheet td.current {
    outline: 2px solid #3d8cc4;
    outline-offset: -1px;
}

.vscroll {
    flex: none;
    width: 17px;
    background: #f0f0f0;
}

.thumb {
    display: block;
    background: #cdcdcd;
}

.sheet-scroll {
    width: 16px;
}

.sheet-scroll .thumb {
    height: 112px;
    margin-top: 1px;
}

.editor-scroll {
    display: flex;
    flex-direction: column;
}

.editor-scroll .thumb {
    height: 243px;
    margin-top: 1px;
}

.editor-scroll .thumb-end {
    height: 42px;
    margin-top: auto;
}

.hscroll {
    position: absolute;
    left: 16px;
    right: 17px;
    bottom: 7px;
    height: 17px;
    padding: 1px 0;
    background: #f0f0f0;
}

.hscroll .thumb {
    width: 88%;
    height: 15px;
}

.handle {
    position: absolute;
    width: 6px;
    height: 6px;
    background: #000;
    border: 1px solid #fff;
}

.handle-tl, .handle-t, .handle-tr {
    top: -6px;
}

.handle-tl, .handle-l {
    left: -6px;
}

.handle-t {
    left: 50%;
    margin-left: -3px;
}

.handle-tr, .handle-r {
    right: -6px;
}

.handle-l, .handle-r {
    top: 456px;
}

/* side panel */
.side {
    position: relative;
    width: 200px;
    display: flex;
    flex-direction: column;
    border-left: 1px solid #8a9cb4;
}

.side-caption, .prop-caption {
    display: flex;
    align-items: center;
    height: 20px;
    padding: 0 1px 0 3px;
    background: linear-gradient(#c0d0e0, #d6e4f2);
}

.side-caption h2, .prop-caption h2 {
    flex: 1;
    font-size: 13px;
}

.side-caption button, .prop-caption button {
    width: 17px;
}

.side-body {
    flex: 1;
    margin: 0 3px 0 2px;
    padding: 3px 1px;
    background: #fff;
    border: 1px solid #8a93a8;
}

.filter {
    display: block;
    width: 100%;
    height: 19px;
    padding: 0 2px;
    border: 1px solid #555;
    border-bottom-width: 2px;
    background: #fff;
}

.filter::placeholder {
    color: #666;
}

.files {
    padding: 3px 0 0 7px;
}

.files li {
    display: flex;
    align-items: center;
    height: 18px;
}

.files span {
    padding-left: 5px;
}

.toggle {
    width: 9px;
    height: 9px;
    border: 1px solid #999;
    background: linear-gradient(#333, #333) center / 5px 1px no-repeat;
}

.dots {
    width: 6px;
    border-top: 1px dotted #888;
}

.files .file {
    padding-left: 23px;
}

.elbow {
    width: 11px;
    height: 10px;
    margin-top: -9px;
    border: dotted #888;
    border-width: 0 0 1px 1px;
}

.side-tabs {
    display: flex;
    height: 27px;
    padding: 1px 3px 6px;
}

.side-tabs button {
    flex: 1;
    display: flex;
    align-items: center;
    gap: 2px;
    padding-left: 2px;
    background: #f0f0f0;
    border-right: 1px solid #ccc;
    color: #666;
    font-size: 13px;
    white-space: nowrap;
}

.side-tabs .active {
    background: #fff;
    color: #000;
}

.ime {
    position: absolute;
    left: 5px;
    right: 15px;
    bottom: 42px;
    display: flex;
    align-items: center;
    justify-content: space-between;
    height: 32px;
    padding-right: 5px;
    background: linear-gradient(#bcd3e6, #bcd3e6) 20px 4px / 100% 1px no-repeat, linear-gradient(#bcd3e6, #bcd3e6) 20px 29px / 100% 1px no-repeat, linear-gradient(#bcd3e6, #bcd3e6) right 4px / 1px 25px no-repeat;
    color: #1169c4;
}

.ime b {
    font-size: 15px;
    font-weight: bold;
}

.ime svg {
    width: 16px;
    height: 16px;
}

.ime .ime-logo {
    width: 32px;
    height: 32px;
}

/* object properties */
.properties {
    display: flex;
    flex-direction: column;
    height: 298px;
    background: #f0f0f0;
}

.prop-caption {
    height: 21px;
    background: linear-gradient(#9ab5d3, #b9cfe9);
}

.prop-tabs {
    display: flex;
    align-items: flex-end;
    height: 25px;
    border-bottom: 1px solid #dcdcdc;
    border-top: 1px solid #e8f2fb;
}

.prop-tabs button {
    width: 48px;
    height: 22px;
    padding-left: 7px;
    text-align: left;
    border: 1px solid #dcdcdc;
    border-width: 1px 1px 0 0;
}

.prop-tabs .active {
    width: 50px;
    height: 24px;
    margin-bottom: -1px;
    background: #fff;
}

.prop-body {
    flex: 1;
    min-height: 0;
    display: flex;
    gap: 4px;
    margin-right: 3px;
    padding: 6px 5px 7px 9px;
    background: #fff;
    border-right: 1px solid #dcdcdc;
    border-bottom: 1px solid #dcdcdc;
}

.prop-tree, .prop-list {
    border: 1px solid #eee;
    border-top: 2px solid #6a6a6a;
    border-left: 1px solid #6a6a6a;
    overflow: hidden;
}

.prop-tree {
    width: 127px;
    padding-left: 5px;
    line-height: 18px;
}

.prop-tree ul {
    margin: 1px 0 0 8px;
}

.prop-tree li {
    display: flex;
    align-items: center;
    height: 20px;
    gap: 2px;
    background: repeating-linear-gradient(#888 0 1px, transparent 1px 2px) left top / 1px 100% no-repeat;
}

.prop-tree li::before {
    content: "";
    width: 8px;
    border-top: 1px dotted #888;
}

.prop-tree li:last-child {
    background-size: 1px 10px;
}

.prop-tree b {
    padding: 0 2px;
    margin-left: -2px;
    background: #eee;
}

.prop-list {
    flex: 1;
    display: flex;
    align-items: flex-start;
}

.prop-list table {
    flex: 1;
    table-layout: fixed;
    border-collapse: collapse;
}

.prop-list th {
    height: 21px;
    padding: 0;
    border-right: 1px solid #e5e5e5;
    font-weight: normal;
}

.prop-list th:last-child {
    border-right: 0;
}

.prop-list td {
    height: 21px;
    padding: 0;
    line-height: 18px;
}

.prop-list td:first-child {
    padding-left: 3px;
}

.prop-list td .icon {
    width: 18px;
    height: 18px;
    margin-left: 1px;
}

.prop-list td input {
    display: block;
    margin-left: 3px;
    border: 1px solid #4a626c;
    background: linear-gradient(135deg, #d8e0e0, #fff);
}

.prop-list .col-name {
    width: 300px;
    padding-left: 7px;
    text-align: left;
}

.col-static {
    width: 120px;
}

.col-dynamic, .col-cycle {
    width: 60px;
}

.col-indirect {
    width: 50px;
}

.prop-scroll {
    align-self: stretch;
    display: flex;
    flex-direction: column;
}

.prop-scroll .thumb {
    height: 43px;
}

.scroll-end {
    margin-top: auto;
}

/* bottom bars */
.output-tabs {
    display: inline-flex;
    height: 19px;
    margin: 3px 0 0 4px;
    padding: 0 18px 0 3px;
    gap: 22px;
    background: #f0f0f0;
    border: 1px solid #dcdcdc;
    border-width: 1px 1px 0 0;
    color: #666;
    vertical-align: top;
}

.output-tabs button {
    display: flex;
    align-items: center;
    gap: 10px;
    font-size: 13px;
}

.layers {
    display: flex;
}

.toolbar .layers button {
    background: #cbe4f5;
    border: 1px solid #2a7fb5;
    font-size: 11px;
    font-weight: 500;
}

.combo-layer {
    width: 194px;
    height: 19px;
    margin-left: 2px;
}

.combo-layer select {
    padding-left: 8px;
}

.statusbar {
    display: flex;
    height: 22px;
    margin-top: 1px;
    padding-left: 4px;
    background: #f0f0f0;
    border-top: 1px solid #d5d5d5;
    line-height: 20px;
    white-space: nowrap;
}

.status-help {
    flex: 1;
}

.status-lang {
    width: 202px;
}

.status-object {
    width: 213px;
    padding-left: 4px;
    border-left: 1px solid #d5d5d5;
}

.status-pos {
    display: flex;
    align-items: center;
    gap: 1px;
    width: 202px;
    padding-left: 6px;
    border-left: 1px solid #d5d5d5;
    font-size: 11px;
}

.status-key {
    width: 32px;
    padding-left: 3px;
    border-left: 1px solid #d5d5d5;
    font-size: 11px;
}

.off {
    color: #888;
}
```

FILE: script.js
```js
// colour palette
var colors = ["#870015", "#b97a56", "#ec1c24", "#ff7f27", "#ffc90d", "#fff200", "#b5e61d", "#22b14c",
    "#00a2e8", "#3f48cc", "#a349a4", "#c8bfe7", "#c3c3c3", "#9b9e9e", "#000000", "#ffffff"];
var swatches = document.getElementById("swatches");
for (var i = 0; i < colors.length; i++) {
    var button = document.createElement("button");
    button.setAttribute("aria-label", colors[i]);
    button.innerHTML = '<i style="background:' + colors[i] + '"></i>';
    swatches.appendChild(button);
}

// layer buttons 0 - 15
var layers = document.getElementById("layers");
for (var i = 0; i < 16; i++) {
    var layer = document.createElement("button");
    layer.textContent = i;
    layers.appendChild(layer);
}

// spreadsheet, columns A - T
var letters = "ABCDEFGHIJKLMNOPQRST";
var html = '<tr><th class="corner"></th>';
for (var c = 0; c < letters.length; c++) {
    html += '<th' + (c == 0 ? ' class="current"' : '') + '>' + letters[c] + '</th>';
}
html += '</tr>';
for (var r = 1; r <= 16; r++) {
    html += '<tr><th class="row-head' + (r == 1 ? ' current' : '') + '">' + r + '</th>';
    for (var c = 0; c < letters.length; c++) {
        html += '<td' + (r == 1 && c == 0 ? ' class="current"' : '') + '></td>';
    }
    html += '</tr>';
}
document.getElementById("sheet").innerHTML = html;

// property rows
var props = [
    ["Title_name", "工艺记录"],
    ["Template_name_1", "模板1"],
    ["Template_name_2", "模板2"],
    ["Template_name_3", "模板3"],
    ["Template_name_4", "模版4"],
    ["Template_name_5", "模版5"],
    ["Template_name_6", "模版6"],
    ["Template_name_7", "模版7"],
    ["Template_name_8", "模板8"],
    ["AutoSize", "False"],
    ["", ""]
];
var rows = "";
for (var i = 0; i < props.length; i++) {
    rows += '<tr><td>' + props[i][0] + '</td><td>' + props[i][1] + '</td>' +
        '<td><svg class="icon"><use href="#i-bulb"/></svg></td><td></td>' +
        '<td><input type="checkbox" aria-label="间接 ' + props[i][0] + '"></td><td></td></tr>';
}
document.getElementById("props").innerHTML = rows;
```
